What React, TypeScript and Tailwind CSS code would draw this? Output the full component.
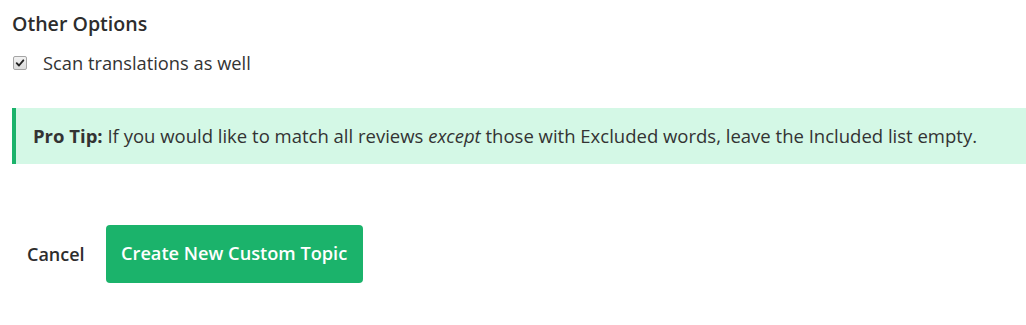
export default function App() {
  return (
    <div className="w-[1026px] h-[325px] bg-white text-[#333333] pl-3 pt-[11px] overflow-hidden" style={{ fontFamily: '"Open Sans", "Noto Sans", sans-serif' }}>
      <h3 className="text-[19.6px] font-semibold leading-[26px] h-[26px] text-[#2d2d2d]">Other Options</h3>

      {/* checkbox */}
      <label className="mt-[14px] flex items-center h-[24px]">
        <span className="w-[14px] h-[14px] ml-[1px] rounded-[2px] border border-[#a5a5a5] bg-gradient-to-b from-[#f2f2f2] to-[#dcdcdc] flex items-center justify-center">
          <svg viewBox="0 0 12 12" className="w-[10px] h-[10px]">
            <path d="M2 6.2 L4.8 9 L10 2.8" fill="none" stroke="#222" strokeWidth="2.2" strokeLinecap="round" strokeLinejoin="round" />
          </svg>
        </span>
        <span className="ml-[16px] text-[18.3px]">Scan translations as well</span>
      </label>

      {/* pro tip */}
      <div className="mt-[33px] h-[56px] bg-[#d4f8e6] border-l-[4px] border-[#1bb36b] flex items-center pl-[17px]">
        <p className="text-[18.5px] whitespace-nowrap">
          <strong className="font-bold">Pro Tip:</strong> If you would like to match all reviews <em>except</em> those with Excluded words, leave the Included list empty.
        </p>
      </div>

      {/* actions */}
      <div className="mt-[61px] flex items-center">
        <button className="ml-[15px] text-[18px] font-semibold text-[#2d2d2d]">Cancel</button>
        <button className="ml-[21px] h-[58px] w-[257px] rounded-[4px] bg-[#1bb36b] text-white text-[18.2px] font-semibold">
          Create New Custom Topic
        </button>
      </div>
    </div>
  );
}
